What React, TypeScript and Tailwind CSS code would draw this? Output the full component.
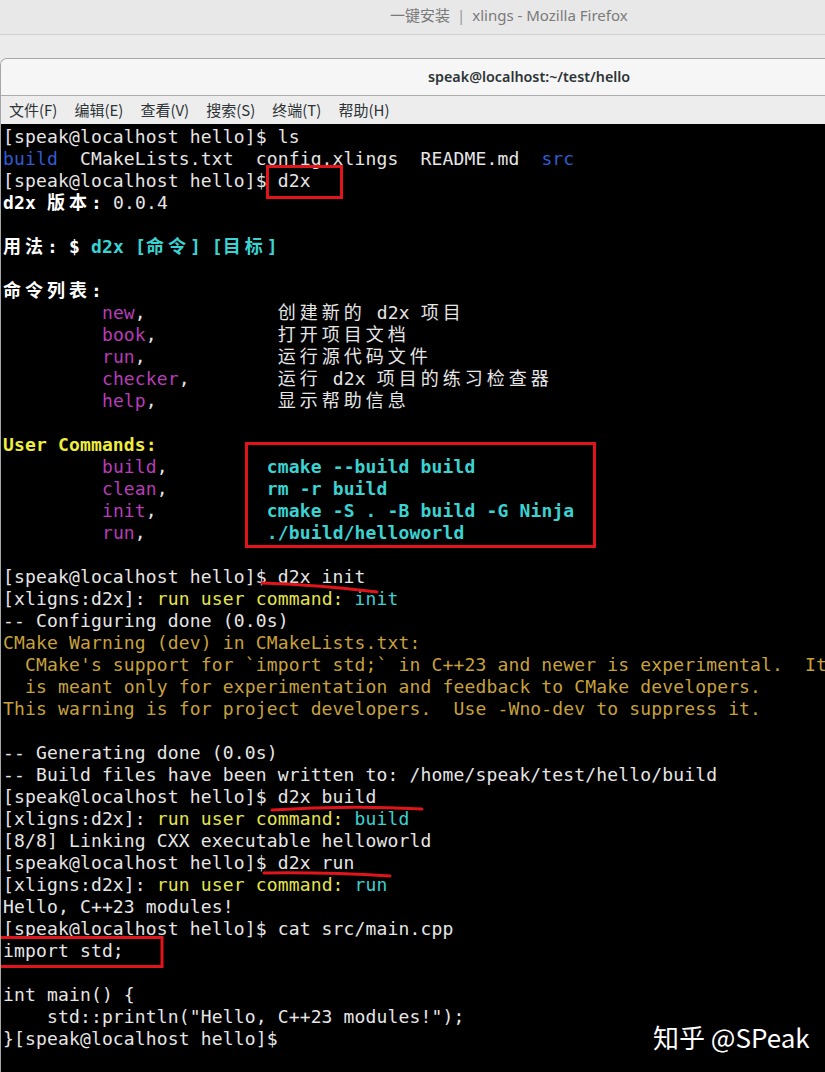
import { FC, ReactNode } from "react";

type Seg = [string, string];

const W = "text-[#e6e6e6]";
const WB = "text-white font-bold";
const BL = "text-[#2f5cd4]";
const CY = "text-[#3ad2d2]";
const CYB = "text-[#3ad2d2] font-bold";
const MG = "text-[#b83cb8]";
const YL = "text-[#e6e64a]";
const YLB = "text-[#f0ee3c] font-bold";
const GD = "text-[#c8a23a]";

const pad = (n: number) => " ".repeat(n);
const prompt = "[speak@localhost hello]$ ";

// CJK glyphs take two terminal cells (22px), so widen them with letter spacing
const cells = (text: string): ReactNode[] =>
  text.split(/([\u3000-\u9fff\uff00-\uffef]+)/).map((part, i) =>
    /[\u3000-\u9fff\uff00-\uffef]/.test(part) ? (
      <span key={i} className="tracking-[4px]">
        {part}
      </span>
    ) : (
      part
    )
  );

const lines: Seg[][] = [
  [[prompt + "ls", W]],
  [
    ["build", BL],
    ["  CMakeLists.txt  config.xlings  README.md  ", W],
    ["src", BL],
  ],
  [[prompt + "d2x", W]],
  [
    ["d2x 版本:", WB],
    [" 0.0.4", W],
  ],
  [],
  [
    ["用法: $ ", WB],
    ["d2x [命令] [目标]", CYB],
  ],
  [],
  [["命令列表:", WB]],
  [[pad(9), W], ["new", MG], [",", W], [pad(12) + "创建新的 d2x 项目", W]],
  [[pad(9), W], ["book", MG], [",", W], [pad(11) + "打开项目文档", W]],
  [[pad(9), W], ["run", MG], [",", W], [pad(12) + "运行源代码文件", W]],
  [[pad(9), W], ["checker", MG], [",", W], [pad(8) + "运行 d2x 项目的练习检查器", W]],
  [[pad(9), W], ["help", MG], [",", W], [pad(11) + "显示帮助信息", W]],
  [],
  [["User Commands:", YLB]],
  [[pad(9), W], ["build", MG], [",", W], [pad(9), W], ["cmake --build build", CYB]],
  [[pad(9), W], ["clean", MG], [",", W], [pad(9), W], ["rm -r build", CYB]],
  [[pad(9), W], ["init", MG], [",", W], [pad(10), W], ["cmake -S . -B build -G Ninja", CYB]],
  [[pad(9), W], ["run", MG], [",", W], [pad(11), W], ["./build/helloworld", CYB]],
  [],
  [[prompt + "d2x init", W]],
  [["[xligns:d2x]: ", W], ["run user command: ", YL], ["init", CY]],
  [["-- Configuring done (0.0s)", W]],
  [["CMake Warning (dev) in CMakeLists.txt:", GD]],
  [["  CMake's support for `import std;` in C++23 and newer is experimental.  It", GD]],
  [["  is meant only for experimentation and feedback to CMake developers.", GD]],
  [["This warning is for project developers.  Use -Wno-dev to suppress it.", GD]],
  [],
  [["-- Generating done (0.0s)", W]],
  [["-- Build files have been written to: /home/speak/test/hello/build", W]],
  [[prompt + "d2x build", W]],
  [["[xligns:d2x]: ", W], ["run user command: ", YL], ["build", CY]],
  [["[8/8] Linking CXX executable helloworld", W]],
  [[prompt + "d2x run", W]],
  [["[xligns:d2x]: ", W], ["run user command: ", YL], ["run", CY]],
  [["Hello, C++23 modules!", W]],
  [[prompt + "cat src/main.cpp", W]],
  [["import std;", W]],
  [],
  [["int main() {", W]],
  [['    std::println("Hello, C++23 modules!");', W]],
  [["}" + prompt, W]],
];

const menu = ["文件(F)", "编辑(E)", "查看(V)", "搜索(S)", "终端(T)", "帮助(H)"];

const Terminal: FC = () => (
  <div className="relative flex-1 bg-black pl-[2px] pt-[2px] font-['DejaVu_Sans_Mono','Noto_Sans_CJK_SC',monospace] text-[18px] leading-[22px] tracking-[0.15px] whitespace-pre">
    {lines.map((segs, i) => (
      <div key={i} className="h-[22px]">
        {segs.map(([text, cls], j) => (
          <span key={j} className={cls}>
            {cells(text)}
          </span>
        ))}
      </div>
    ))}

    {/* red annotations drawn over the screenshot */}
    <svg
      className="absolute left-0 top-0 pointer-events-none"
      width="825"
      height="948"
      fill="none"
      stroke="#e0141a"
      strokeWidth="3"
    >
      <rect x="266.5" y="42.5" width="74" height="31" />
      <rect x="245.5" y="319.5" width="348" height="103" />
      <rect x="-2" y="813.5" width="163" height="29" />
      <path d="M261 459 Q320 461 376 468" strokeLinecap="round" />
      <path d="M271 686 Q345 681 421 685" strokeLinecap="round" />
      <path d="M263 749 Q325 748 389 752" strokeLinecap="round" />
    </svg>

    <div className="absolute left-[652px] top-[898px] text-[26px] leading-[30px] tracking-normal text-white font-['Noto_Sans_CJK_SC',sans-serif]">
      知乎 @SPeak
    </div>
  </div>
);

const App: FC = () => {
  return (
    <div className="w-[825px] h-[1072px] overflow-hidden bg-[#ebebeb] flex flex-col">
      <div className="h-[35px] shrink-0 bg-[#e8e8e8] border-b border-[#cfcfcf] flex items-center pl-[390px] pb-[3px] text-[15px] text-[#7a7a7a] font-['Noto_Sans','Noto_Sans_CJK_SC',sans-serif]">
        一键安装 <span className="mx-[7px] text-[#999]">|</span> xlings - Mozilla Firefox
      </div>
      <div className="h-[23px] shrink-0" />
      <div className="flex-1 flex flex-col rounded-tl-[7px] border-l border-t border-[#a6a6a6] overflow-hidden">
        <div className="h-[37px] shrink-0 bg-[#f6f6f6] border-b border-[#adadad] flex items-center pl-[427px] text-[14.3px] font-semibold text-[#2e3436] font-['Noto_Sans',sans-serif]">
          speak@localhost:~/test/hello
        </div>
        <div className="h-[28px] shrink-0 bg-[#ededed] flex items-center gap-[17px] pl-[8px] text-[15px] text-[#2e3436] font-['Noto_Sans_CJK_SC',sans-serif]">
          {menu.map((m) => (
            <span key={m}>{m}</span>
          ))}
        </div>
        <Terminal />
      </div>
    </div>
  );
};

export default App;
